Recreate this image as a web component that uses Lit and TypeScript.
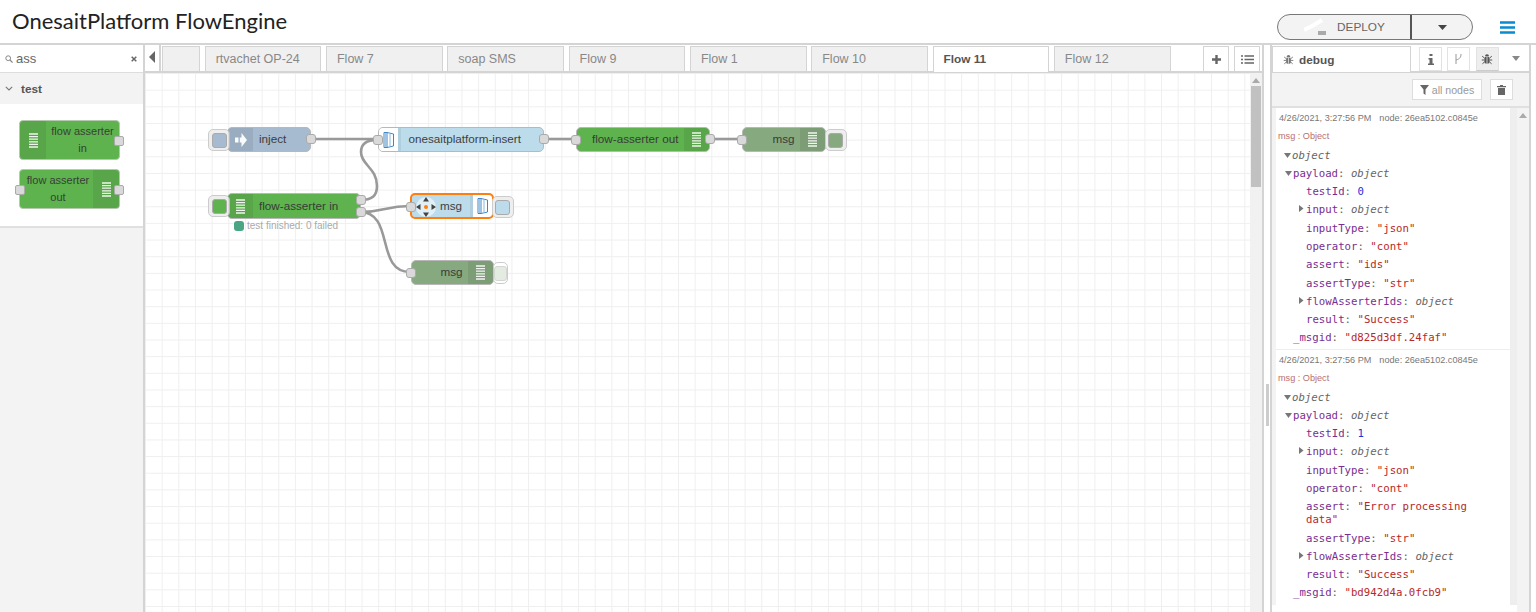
import { LitElement, html, css, svg } from "lit";
import { customElement } from "lit/decorators.js";

const CANVAS_X = 145;
const CANVAS_Y = 73;

const listIcon = html`<svg width="9" height="15" viewBox="0 0 9 15"><path d="M0 1h9M0 3.6h9M0 6.2h9M0 8.8h9M0 11.4h9M0 14h9" stroke="#fff" stroke-width="1.3" opacity=".9"/></svg>`;
const injectIcon = html`<svg width="12" height="18" viewBox="0 0 12 18"><path d="M0 6.5h3.5v5H0zM4.8 6.5h1.7V2L12 9l-5.5 7v-4.5H4.8z" fill="#fff" opacity=".95"/></svg>`;
const doorIcon = html`<svg width="12" height="18" viewBox="0 0 12 18" fill="none"><path d="M1 1.5h3v15H1zM4 1.5 10.5 3v12L4 16.5" stroke="#3f86c4" stroke-width="1"/><path d="M2.5 2v14M7 2.5v13" stroke="#9cc6e4" stroke-width="1.2"/></svg>`;

interface NodeDef {
  x: number; y: number; w: number; h: number; label: string; color: string;
  icon: "list" | "inject" | "door"; iconSide: "left" | "right";
  labelPad: number;
  inPort?: boolean; outPorts?: number[]; button?: { side: "left" | "right"; fill: string; pale?: boolean };
  selected?: boolean; move?: boolean;
}

const GREEN = "#5fb34f";
const BLUE = "#bcdcec";
const SLATE = "#a6bbcf";
const SAGE = "#87a980";

const nodes: NodeDef[] = [
  { x: 227, y: 127, w: 84, h: 25, label: "inject", color: SLATE, icon: "inject", iconSide: "left", labelPad: 31, outPorts: [12], button: { side: "left", fill: SLATE } },
  { x: 378, y: 127, w: 166, h: 25, label: "onesaitplatform-insert", color: BLUE, icon: "door", iconSide: "left", labelPad: 29.5, inPort: true, outPorts: [12] },
  { x: 576, y: 127, w: 134, h: 25, label: "flow-asserter out", color: GREEN, icon: "list", iconSide: "right", labelPad: 15, inPort: true, outPorts: [12] },
  { x: 742, y: 127, w: 84, h: 25, label: "msg", color: SAGE, icon: "list", iconSide: "right", labelPad: 29.5, inPort: true, button: { side: "right", fill: SAGE } },
  { x: 227, y: 193, w: 134, h: 26, label: "flow-asserter in", color: GREEN, icon: "list", iconSide: "left", labelPad: 31, outPorts: [7, 19], button: { side: "left", fill: GREEN } },
  { x: 410, y: 193, w: 84, h: 26, label: "msg", color: BLUE, icon: "door", iconSide: "right", labelPad: 28, inPort: true, selected: true, move: true, button: { side: "right", fill: BLUE } },
  { x: 411, y: 260, w: 83, h: 25, label: "msg", color: SAGE, icon: "list", iconSide: "right", labelPad: 28.5, inPort: true, button: { side: "right", fill: "#e4ebe0", pale: true } },
];

const wires = [
  "M311 139H377",
  "M360 200C372 200 377 196 377 186C377 168 361 165 361 152C361 143 368 140 377 140",
  "M360 212C385 212 385 206 410 206",
  "M360 212C395 212 375 272 410 272",
  "M544 139H576",
  "M710 139H742",
];

interface Row { pad: number; caret?: "down" | "right"; key?: string; val?: string; cls?: string; wrap?: string }

const treeRows = (id: string, msgid: string, assertVal: string, wrap?: string): Row[] => [
  { pad: 16, caret: "down", val: "object", cls: "type" },
  { pad: 17, caret: "down", key: "payload", val: "object", cls: "type" },
  { pad: 30, key: "testId", val: id, cls: "num" },
  { pad: 30, caret: "right", key: "input", val: "object", cls: "type" },
  { pad: 30, key: "inputType", val: '"json"', cls: "str" },
  { pad: 30, key: "operator", val: '"cont"', cls: "str" },
  { pad: 30, key: "assert", val: assertVal, cls: "str", wrap },
  { pad: 30, key: "assertType", val: '"str"', cls: "str" },
  { pad: 30, caret: "right", key: "flowAsserterIds", val: "object", cls: "type" },
  { pad: 30, key: "result", val: '"Success"', cls: "str" },
  { pad: 17, key: "_msgid", val: msgid, cls: "str" },
];

const messages = [
  { rows: treeRows("0", '"d825d3df.24faf"', '"ids"') },
  { rows: treeRows("1", '"bd942d4a.0fcb9"', '"Error processing', 'data"') },
];

const tabs = ["", "rtvachet OP-24", "Flow 7", "soap SMS", "Flow 9", "Flow 1", "Flow 10", "Flow 11", "Flow 12"];

const bug = (c: string, s = 12) => html`<svg width=${s} height=${s} viewBox="0 0 12 12"><path d="M4 3.2a2 2 0 0 1 4 0z" fill=${c}/><rect x="3.4" y="3.8" width="5.2" height="6.8" rx="1.6" fill=${c}/><path d="M3.4 5 1.2 3.2M8.6 5l2.2-1.8M3.4 7H.8M8.6 7h2.6M3.4 9l-2 1.8M8.6 9l2 1.8" stroke=${c} stroke-width="1"/><path d="M6 4v6.5" stroke="#fff" stroke-width=".7"/></svg>`;

@customElement("app-root")
export class AppRoot extends LitElement {
  static styles = css`
    :host { display: block; width: 1536px; height: 612px; overflow: hidden; background: #fff; font-family: "Liberation Sans", Arial, sans-serif; color: #555; }
    .header { height: 43px; display: flex; align-items: center; box-sizing: border-box; }
    .title { font-family: "Lato", "Noto Sans", sans-serif; font-size: 22px; color: #222; margin-left: 12px; margin-top: -3px; flex: 1; white-space: nowrap; }
    .deploy { width: 196px; height: 26px; margin-top: 11px; box-sizing: border-box; border: 1.3px solid #777; border-radius: 13px; background: #f3f3f3; display: flex; overflow: hidden; }
    .deploy-main { width: 134px; flex: none; display: flex; align-items: center; border-right: 2px solid #555; font-size: 11.8px; color: #666; padding-left: 26px; box-sizing: border-box; gap: 10px; }
    .deploy-caret { flex: 1; display: flex; align-items: center; justify-content: center; }
    .burger { margin: 11px 21px 0 27px; display: block; }
    .main { display: flex; height: 569px; border-top: 2px solid #d4d4d4; box-sizing: border-box; }

    .palette { width: 145px; flex: none; border-right: 2px solid #d4d4d4; box-sizing: border-box; background: #f3f3f3; display: flex; flex-direction: column; }
    .search { height: 28px; box-sizing: border-box; background: #fff; border-bottom: 1px solid #ddd; display: flex; align-items: center; padding: 0 6px 0 5px; font-size: 13px; color: #666; gap: 3px; flex: none; }
    .search span { flex: 1; }
    .cat { height: 31px; display: flex; align-items: center; padding-left: 5px; gap: 8px; font-size: 11.8px; font-weight: bold; color: #555; background: #f3f3f3; flex: none; }
    .cat-body { height: 106px; background: #fff; border-bottom: 2px solid #e0e0e0; padding: 16px 0 0 19px; flex: none; display: flex; flex-direction: column; gap: 9px; }
    .pnode { position: relative; width: 101px; height: 40px; background: #5fb34f; border-radius: 4px; border: 1px solid #b4c9ae; box-sizing: border-box; display: flex; color: #333; font-size: 11px; line-height: 16.6px; text-align: center; }
    .pnode-icon { width: 26px; flex: none; background: rgba(0, 0, 0, 0.07); display: flex; align-items: center; justify-content: center; }
    .pnode-label { flex: 1; padding-top: 2px; min-width: 0; opacity: 0.9; }
    .pnode-label.pad { padding-left: 3px; }
    .pport { position: absolute; width: 8px; height: 8px; background: #d9d9d9; border: 1px solid #aaa; border-radius: 2px; top: 15px; }
    .pport.l { left: -5px; }
    .pport.r { right: -5px; }

    .workspace { flex: 1; min-width: 0; display: flex; flex-direction: column; border-right: 2px solid #d4d4d4; }
    .tabbar { height: 28px; flex: none; display: flex; align-items: flex-end; border-bottom: 2px solid #d4d4d4; box-sizing: border-box; background: #fff; }
    .collapse { width: 16px; flex: none; border-right: 2px solid #d4d4d4; box-sizing: border-box; display: flex; align-items: flex-start; justify-content: center; padding-top: 6px; align-self: stretch; }
    .tab { width: 116.67px; height: 25px; margin-left: 4.66px; flex: none; box-sizing: border-box; border: 1.5px solid #d4d4d4; border-bottom: 0; background: #f0f0f0; font-size: 12.5px; color: #888; padding: 5px 0 0 10px; white-space: nowrap; }
    .tab.first { width: 38px; margin-left: 1px; }
    .tab.active { background: #fff; color: #555; font-weight: bold; font-size: 11.8px; height: 26px; margin-bottom: -1px; }
    .tb-btn { width: 26px; height: 25px; flex: none; border: 1.5px solid #d4d4d4; border-bottom: 0; box-sizing: border-box; display: flex; align-items: center; justify-content: center; background: #fff; }
    .tb-add { margin-left: auto; }
    .tb-list { margin: 0 2px 0 5px; }

    .canvas-wrap { flex: 1; display: flex; min-height: 0; }
    .canvas { position: relative; flex: 1; overflow: hidden; background-color: #fff; background-image: linear-gradient(#efefef 1.2px, transparent 1.2px), linear-gradient(90deg, #efefef 1.2px, transparent 1.2px); background-size: 16.67px 16.67px; }
    .wires { position: absolute; left: 0; top: 0; }
    .vscroll { width: 12px; flex: none; background: #f1f1f1; display: flex; flex-direction: column; align-items: center; padding-top: 5px; box-sizing: border-box; }
    .vthumb { width: 10px; height: 101px; background: #c1c1c1; margin-top: 3px; }

    .node { position: absolute; box-sizing: border-box; border: 1px solid #b8b8b8; border-radius: 5px; display: flex; align-items: center; font-size: 11.7px; color: #333; white-space: nowrap; }
    .node.sel { border: 2px solid #ff7f0e; }
    .node-label { flex: 1; opacity: 0.92; margin-top: -2px; }
    .node-icon { position: absolute; top: 0; bottom: 0; width: 25px; background: rgba(0, 0, 0, 0.07); display: flex; align-items: center; justify-content: center; }
    .node-icon.left { left: 0; border-radius: 4px 0 0 4px; }
    .node-icon.right { right: 0; border-radius: 0 4px 4px 0; }
    .node-icon.door { width: 19px; background: #fff; box-shadow: 3px 0 0 rgba(0, 0, 0, 0.06); }
    .node-icon.door.right { box-shadow: -3px 0 0 rgba(0, 0, 0, 0.06); }
    .port { position: absolute; width: 10px; height: 10px; box-sizing: border-box; background: #d9d9d9; border: 1px solid #aaa; border-radius: 3px; }
    .btn-outer { position: absolute; top: 1px; width: 22px; height: 22px; box-sizing: border-box; border: 1.5px solid #ccc; background: #eee; border-radius: 5px; display: flex; align-items: center; }
    .btn-outer.left { left: -20px; padding-left: 3px; }
    .btn-outer.right { right: -22px; justify-content: flex-end; padding-right: 3px; }
    .btn-outer.pale { width: 15px; right: -15px; background: #fff; padding-right: 0; }
    .btn-inner { width: 15px; height: 15px; border-radius: 3px; box-sizing: border-box; border: 1px solid #aaa; }
    .btn-outer.pale .btn-inner { border-color: #d5d5d5; }
    .move { position: absolute; left: 1.6px; top: 0; }
    .status { position: absolute; display: flex; align-items: center; gap: 3px; font-size: 10px; color: #aaa; white-space: nowrap; }
    .status i { width: 10px; height: 10px; border-radius: 3px; background: #4aa584; display: block; }

    .splitter { width: 6px; flex: none; display: flex; align-items: center; justify-content: center; }
    .handle { width: 3px; height: 42px; background: #ccc; margin-top: 152px; }

    .sidebar { width: 261px; flex: none; border-left: 2px solid #d4d4d4; border-right: 2px solid #d4d4d4; box-sizing: border-box; display: flex; flex-direction: column; background: #f3f3f3; margin-right: 5px; }
    .stabs { height: 28px; flex: none; box-sizing: border-box; border-bottom: 2px solid #d4d4d4; background: #fff; display: flex; align-items: flex-end; }
    .stab { width: 139px; height: 26px; flex: none; box-sizing: border-box; border: 1.5px solid #d4d4d4; border-bottom: 0; display: flex; align-items: center; gap: 5px; padding-left: 10px; font-size: 11.8px; font-weight: bold; color: #555; margin-bottom: -1px; background: #fff; }
    .sbtn { width: 23px; height: 24px; flex: none; box-sizing: border-box; border: 1.5px solid #e2e2e2; display: flex; align-items: center; justify-content: center; margin: 0 0 0 5.4px; background: #fff; }
    .sbtn.first { margin-left: 8px; }
    .sbtn.on { background: #eee; border-bottom-color: #ccc; }
    .scaret { margin-left: 13px; margin-bottom: 6px; }
    .stools { height: 35px; flex: none; box-sizing: border-box; border-bottom: 2px solid #e0e0e0; display: flex; justify-content: flex-end; align-items: center; padding: 0 16px 0 0; gap: 8px; }
    .tool { height: 21px; box-sizing: border-box; border: 1.5px solid #ddd; background: #fff; display: flex; align-items: center; justify-content: center; gap: 3px; font-size: 10.6px; color: #999; }
    .tool.filter { width: 70px; }
    .tool.trash { width: 23px; }
    .sbody { flex: 1; min-height: 0; display: flex; flex-direction: column; }
    .msgs { height: 497px; flex: none; display: flex; overflow: hidden; }
    .msg-col { width: 234px; margin-left: 4px; flex: none; background: #fff; }
    .track { width: 7px; flex: none; background: #eee; }
    .track-b { flex: 1; position: relative; }
    .up { position: absolute; left: 2px; top: 5px; }
    .sfoot { flex: 1; width: 245px; background: #fff; }
    .msg { height: 241px; border-bottom: 1px solid #eee; }
    .msg + .msg { height: 254px; border: 0; }
    .meta { height: 20px; display: flex; align-items: center; gap: 8px; padding-left: 3px; font-size: 9.15px; color: #777; white-space: nowrap; }
    .name { height: 15px; display: flex; align-items: center; padding-left: 2px; font-size: 9.15px; color: #b96f6f; margin-bottom: 3px; }
    .row { font-family: "DejaVu Sans Mono", monospace; font-size: 10.7px; line-height: 13px; padding-top: 2.65px; padding-bottom: 2.65px; color: #666; width: 215px; white-space: pre-wrap; box-sizing: border-box; }
    .caret { display: inline-block; width: 7px; margin: 0 1px 0 -8px; vertical-align: 1px; }
    .key { color: #792e90; }
    .type { color: #666; font-style: italic; }
    .num { color: #2033d6; }
    .str { color: #b72828; }
  `;

  private renderNode(n: NodeDef) {
    const style = `left:${n.x - CANVAS_X}px;top:${n.y - CANVAS_Y}px;width:${n.w}px;height:${n.h}px;background:${n.color};`;
    const cy = n.h / 2 - 5;
    return html`<div class="node ${n.selected ? "sel" : ""}" style=${style}>
      ${n.button
        ? html`<div class="btn-outer ${n.button.side} ${n.button.pale ? "pale" : ""}"><div class="btn-inner" style="background:${n.button.fill}"></div></div>`
        : ""}
      <div class="node-icon ${n.iconSide} ${n.icon}">
        ${n.icon === "list" ? listIcon : n.icon === "inject" ? injectIcon : doorIcon}
      </div>
      <div class="node-label" style="padding-left:${n.labelPad}px">${n.label}</div>
      ${n.move
        ? html`<svg class="move" width="24" height="24" viewBox="0 0 24 24"><circle cx="12" cy="12" r="10" fill="#fff" opacity=".55"/><path d="M12 2l3 4.5H9zM12 22l-3-4.5h6zM2 12l4.5-3v6zM22 12l-4.5 3V9z" fill="#444"/><circle cx="12" cy="12" r="2" fill="#ff7f0e"/></svg>`
        : ""}
      ${n.inPort ? html`<div class="port" style="left:-6px;top:${cy - 1}px"></div>` : ""}
      ${(n.outPorts ?? []).map((y) => html`<div class="port" style="right:-6px;top:${y - 6}px"></div>`)}
    </div>`;
  }

  private renderRow(r: Row) {
    const caret = r.caret === "down"
      ? html`<svg class="caret" height="5" viewBox="0 0 7 5"><path d="M0 0h7L3.5 5z" fill="#777"/></svg>`
      : r.caret === "right"
        ? html`<svg class="caret" height="7" viewBox="0 0 7 7"><path d="M1 0l4.5 3.5L1 7z" fill="#777"/></svg>`
        : "";
    return html`<div class="row" style="padding-left:${r.pad}px">${caret}${r.key ? html`<span class="key">${r.key}</span>: ` : ""}<span class=${r.cls ?? ""}>${r.val}</span>${r.wrap ? html`<br /><span class=${r.cls ?? ""}>${r.wrap}</span>` : ""}</div>`;
  }

  render() {
    return html`
      <div class="header">
        <div class="title">OnesaitPlatform FlowEngine</div>
        <div class="deploy">
          <div class="deploy-main">
            <svg width="23" height="20" viewBox="0 0 23 20"><path d="M0 13l10-5 8-5" stroke="#fff" stroke-width="4" fill="none"/><rect x="14" y="14" width="8" height="4" fill="#aaa"/></svg>
            <span>DEPLOY</span>
          </div>
          <div class="deploy-caret"><svg width="9" height="5" viewBox="0 0 9 5"><path d="M0 0h9L4.5 5z" fill="#444"/></svg></div>
        </div>
        <svg class="burger" width="15" height="13" viewBox="0 0 15 13"><path d="M0 1.5h15M0 6.5h15M0 11.5h15" stroke="#0a8bd0" stroke-width="2.4"/></svg>
      </div>
      <div class="main">
        <div class="palette">
          <div class="search">
            <svg width="8" height="8" viewBox="0 0 8 8" fill="none"><circle cx="3.2" cy="3.2" r="2.4" stroke="#888" stroke-width="1"/><path d="M5 5l2.6 2.6" stroke="#888" stroke-width="1.2"/></svg>
            <span>ass</span>
            <svg width="6" height="6" viewBox="0 0 6 6"><path d="M.7.7l4.6 4.6M5.3.7.7 5.3" stroke="#666" stroke-width="1.5"/></svg>
          </div>
          <div class="cat">
            <svg width="8" height="5" viewBox="0 0 8 5" fill="none"><path d="M.8.8 4 4l3.2-3.2" stroke="#777" stroke-width="1.1"/></svg>
            <span>test</span>
          </div>
          <div class="cat-body">
            <div class="pnode">
              <div class="pnode-icon">${listIcon}</div>
              <div class="pnode-label">flow asserter<br />in</div>
              <div class="pport r"></div>
            </div>
            <div class="pnode">
              <div class="pport l"></div>
              <div class="pnode-label pad">flow asserter<br />out</div>
              <div class="pnode-icon">${listIcon}</div>
              <div class="pport r"></div>
            </div>
          </div>
        </div>
        <div class="workspace">
          <div class="tabbar">
            <div class="collapse"><svg width="6" height="12" viewBox="0 0 6 12"><path d="M6 0v12L0 6z" fill="#666"/></svg></div>
            ${tabs.map((t, i) => html`<div class="tab ${i === 0 ? "first" : ""} ${t === "Flow 11" ? "active" : ""}">${t}</div>`)}
            <div class="tb-btn tb-add"><svg width="11" height="11" viewBox="0 0 11 11"><path d="M5.5 1v9M1 5.5h9" stroke="#666" stroke-width="2.4"/></svg></div>
            <div class="tb-btn tb-list"><svg width="13" height="9" viewBox="0 0 13 9"><path d="M3.5 1H13M3.5 4.5H13M3.5 8H13M0 1h2M0 4.5h2M0 8h2" stroke="#666" stroke-width="1.6"/></svg></div>
          </div>
          <div class="canvas-wrap">
            <div class="canvas">
              <svg class="wires" width="1105" height="540" viewBox="${CANVAS_X} ${CANVAS_Y} 1105 540" fill="none">
                ${wires.map((d) => svg`<path d=${d} stroke="#999" stroke-width="2.6"/>`)}
              </svg>
              ${nodes.map((n) => this.renderNode(n))}
              <div class="status" style="left:${234 - CANVAS_X}px;top:${220 - CANVAS_Y}px"><i></i><span>test finished: 0 failed</span></div>
            </div>
            <div class="vscroll">
              <svg width="8" height="5" viewBox="0 0 8 5"><path d="M0 5h8L4 0z" fill="#aaa"/></svg>
              <div class="vthumb"></div>
            </div>
          </div>
        </div>
        <div class="splitter"><div class="handle"></div></div>
        <div class="sidebar">
          <div class="stabs">
            <div class="stab">${bug("#777", 11)}<span>debug</span></div>
            <div class="sbtn first"><svg width="6" height="11" viewBox="0 0 6 11"><path d="M1.5 0h3v2h-3zM.5 4h4v5.5H6V11H0V9.5h1.5V5.5h-1z" fill="#666"/></svg></div>
            <div class="sbtn"><svg width="9" height="12" viewBox="0 0 9 12" fill="none"><path d="M2 1v10M2 7C6 6 7 4 7 1" stroke="#999" stroke-width="1"/></svg></div>
            <div class="sbtn on">${bug("#555", 12)}</div>
            <div class="scaret"><svg width="8" height="5" viewBox="0 0 8 5"><path d="M0 0h8L4 5z" fill="#888"/></svg></div>
          </div>
          <div class="stools">
            <div class="tool filter"><svg width="9" height="10" viewBox="0 0 9 10"><path d="M0 0h9L5.5 4.5V10L3.5 8.5v-4z" fill="#666"/></svg><span>all nodes</span></div>
            <div class="tool trash"><svg width="9" height="10" viewBox="0 0 9 10"><path d="M0 1h9v1.2H0zM3 0h3v1H3zM1 3h7v7H1z" fill="#666"/></svg></div>
          </div>
          <div class="sbody">
            <div class="msgs">
              <div class="msg-col">
                ${messages.map((m) => html`<div class="msg">
                  <div class="meta"><span>4/26/2021, 3:27:56 PM</span><span>node: 26ea5102.c0845e</span></div>
                  <div class="name">msg : Object</div>
                  ${m.rows.map((r) => this.renderRow(r))}
                </div>`)}
              </div>
              <div class="track"></div>
              <div class="track-b"><svg class="up" width="8" height="5" viewBox="0 0 8 5"><path d="M0 5h8L4 0z" fill="#aaa"/></svg></div>
            </div>
            <div class="sfoot"></div>
          </div>
        </div>
      </div>
    `;
  }
}
